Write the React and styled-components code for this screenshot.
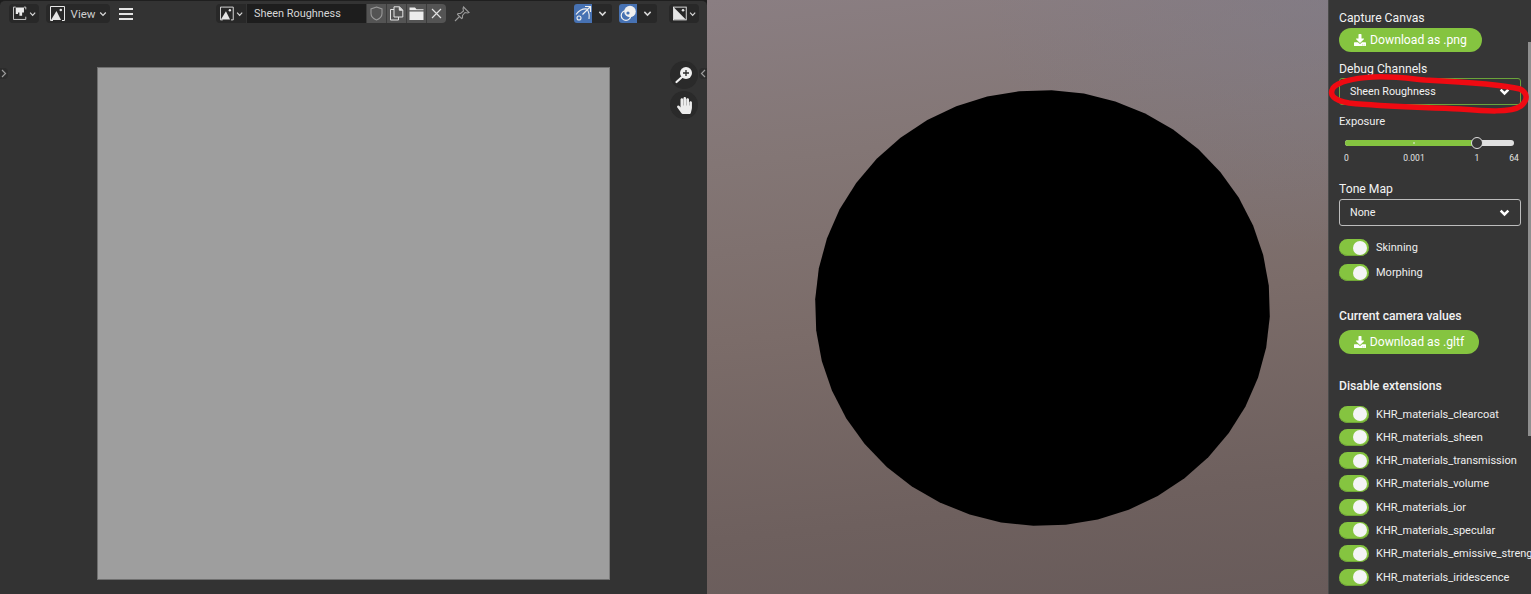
import React from 'react';
import styled, { createGlobalStyle } from 'styled-components';
import { FaDownload, FaHandPaper } from 'react-icons/fa';

const extensions = [
  'KHR_materials_clearcoat',
  'KHR_materials_sheen',
  'KHR_materials_transmission',
  'KHR_materials_volume',
  'KHR_materials_ior',
  'KHR_materials_specular',
  'KHR_materials_emissive_strength',
  'KHR_materials_iridescence',
];

// the model in the viewport is low poly, so the outline has visible facets
const spherePoints = Array.from({ length: 44 }, (_, i) => {
  const a = (i / 44) * Math.PI * 2 + 0.04;
  return `${(227.5 + 227.5 * Math.cos(a)).toFixed(1)},${(218 + 218 * Math.sin(a)).toFixed(1)}`;
}).join(' ');

const Chevron = ({ size = 8, color = '#d8d8d8', width = 1.3 }) => (
  <svg width={size} height={size} viewBox="0 0 10 10" fill="none">
    <path d="M1.5 3.2 L5 6.8 L8.5 3.2" stroke={color} strokeWidth={width * 1.25} />
  </svg>
);

const ImageIcon = () => (
  <svg width="15" height="15" viewBox="0 0 15 15" fill="none">
    <path d="M3 .5H.5v14H3M12 .5h2.500v14H12M3 .5h9" stroke="#e6e6e6" />
    <path d="M1 14 L6.500 5 L11 14Z" fill="#e6e6e6" />
    <circle cx="10.800" cy="4" r="1.300" fill="#e6e6e6" />
  </svg>
);

const EditorTypeIcon = () => (
  <svg width="15" height="15" viewBox="0 0 15 15" fill="none">
    <path d="M3 .5H.5v13.500h13.500V11M14 3V.5h-2" stroke="#d8d8d8" />
    <path d="M3 1h9v5.500h-2V10H7V6.500H5.500V8H3Z" fill="#ececec" />
  </svg>
);

const ShadingIcon = () => (
  <svg width="15" height="15" viewBox="0 0 15 15" fill="none">
    <rect x=".5" y=".5" width="14" height="14" stroke="#e6e6e6" />
    <path d="M1 1 L14 14 H1 Z" fill="#e6e6e6" />
    <circle cx="11" cy="4" r="1.400" fill="#e6e6e6" />
  </svg>
);

const GizmoIcon = () => (
  <svg width="17" height="17" viewBox="0 0 17 17" fill="none" stroke="#f0f0f0">
    <path d="M1 9.500 C4 5.500 8 3.500 12 4 C14 7 14.500 10.500 14 14" strokeWidth="1.100" />
    <path d="M10 1.500h5.500v5.500M15.500 1.500 L7.500 9.500" strokeWidth="1.200" />
    <circle cx="4" cy="13" r="2" strokeWidth="1.100" />
  </svg>
);

const OverlayIcon = () => (
  <svg width="17" height="17" viewBox="0 0 17 17" fill="none">
    <circle cx="6" cy="10.500" r="4.800" stroke="#f0f0f0" strokeWidth="1.200" />
    <circle cx="10" cy="6.500" r="5.800" fill="#f0f0f0" />
    <circle cx="8" cy="8" r="1.600" fill="#4772b3" />
  </svg>
);

const ShieldIcon = () => (
  <svg width="15" height="15" viewBox="0 0 15 15" fill="none">
    <path d="M7.500 1 L13 3 V7.500 C13 11 10 13 7.500 14 C5 13 2 11 2 7.500 V3 Z" stroke="#9a9a9a" strokeWidth="1.100" />
  </svg>
);

const CopyIcon = () => (
  <svg width="15" height="15" viewBox="0 0 15 15" fill="none" stroke="#e2e2e2">
    <path d="M5 3.500H1.500v10.500h8v-3" />
    <path d="M5 11V.8h5.500L13.800 4V11Z" />
    <path d="M10.300 1v3.200h3.500" fill="#e2e2e2" />
  </svg>
);

const FolderIcon = () => (
  <svg width="15" height="15" viewBox="0 0 15 15">
    <path d="M.5 1.500H6L7.500 3.300H14.500V4.300H.5Z" fill="#ececec" />
    <path d="M.5 5.500H14.500V14H.5Z" fill="#ececec" />
  </svg>
);

const CloseIcon = () => (
  <svg width="11" height="11" viewBox="0 0 11 11" stroke="#e0e0e0" strokeWidth="1.200">
    <path d="M1 1 L10 10 M10 1 L1 10" />
  </svg>
);

const PinIcon = () => (
  <svg width="16" height="16" viewBox="0 0 16 16" fill="none" stroke="#9a9a9a" strokeWidth="1.100">
    <path d="M9.500 1 L15 6.500 L13.500 7 L11 6.500 L8.500 9.500 L8.500 12 L7.500 12.500 L3.500 8.500 L4 7.500 L6.500 7.500 L9.500 5 L9 2.500 Z" />
    <path d="M5.500 10.500 L1 15" />
  </svg>
);

const ZoomIcon = () => (
  <svg width="20" height="20" viewBox="0 0 20 20" fill="none">
    <circle cx="12" cy="8" r="6" fill="#f0f0f0" />
    <path d="M12 5v6M9 8h6" stroke="#2b2b2b" strokeWidth="1.300" />
    <path d="M7.500 12.500 L2.500 17" stroke="#f0f0f0" strokeWidth="2.200" strokeLinecap="round" />
  </svg>
);

const TabArrow = ({ left }) => (
  <svg width="6" height="9" viewBox="0 0 6 9" fill="none">
    <path d={left ? 'M5 1 L1.500 4.500 L5 8' : 'M1 1 L4.500 4.500 L1 8'} stroke="#9c9c9c" strokeWidth="1.200" />
  </svg>
);

const App = () => {
  return (
    <>
      <GlobalStyle />
      <Page>
        <Editor>
          <Toolbar>
            <LeftGroup>
              <DarkDropdown>
                <EditorTypeIcon />
                <Chevron />
              </DarkDropdown>
              <DarkDropdown wide>
                <ImageIcon />
                <ToolbarLabel>View</ToolbarLabel>
                <Chevron />
              </DarkDropdown>
              <Hamburger>
                <span />
                <span />
                <span />
              </Hamburger>
            </LeftGroup>
            <CenterGroup>
              <Joined>
                <DarkDropdown square>
                  <ImageIcon />
                  <Chevron />
                </DarkDropdown>
                <NameField>Sheen Roughness</NameField>
                <ActionButton><ShieldIcon /></ActionButton>
                <ActionButton><CopyIcon /></ActionButton>
                <ActionButton><FolderIcon /></ActionButton>
                <ActionButton last><CloseIcon /></ActionButton>
              </Joined>
              <PinSlot><PinIcon /></PinSlot>
            </CenterGroup>
            <RightGroup>
              <Joined>
                <BlueToggle><GizmoIcon /></BlueToggle>
                <ChevronToggle><Chevron size={9} /></ChevronToggle>
              </Joined>
              <Joined>
                <BlueToggle><OverlayIcon /></BlueToggle>
                <ChevronToggle><Chevron size={9} /></ChevronToggle>
              </Joined>
              <ShadingDropdown>
                <ShadingIcon />
                <Chevron />
              </ShadingDropdown>
            </RightGroup>
          </Toolbar>
          <ImageArea>
            <ImagePreview />
          </ImageArea>
          <EdgeTab side="left"><TabArrow /></EdgeTab>
          <EdgeTab side="right"><TabArrow left /></EdgeTab>
          <GizmoStack>
            <GizmoButton><ZoomIcon /></GizmoButton>
            <GizmoButton><FaHandPaper size={17} color="#ececec" /></GizmoButton>
          </GizmoStack>
        </Editor>

        <Viewport>
          <Sphere viewBox="0 0 455 436">
            <polygon points={spherePoints} fill="#000" />
          </Sphere>
        </Viewport>

        <Panel>
          <Scrollbar />
          <SectionLabel>Capture Canvas</SectionLabel>
          <PillButton width={143}>
            <FaDownload size={12} />
            Download as .png
          </PillButton>
          <SectionLabel top={9}>Debug Channels</SectionLabel>
          <SelectBox accent top={1}>
            Sheen Roughness
            <Chevron size={11} color="#fff" width={1.800} />
          </SelectBox>
          <SmallLabel>Exposure</SmallLabel>
          <SliderTrack>
            <SliderFill />
            <SliderDot />
            <SliderThumb />
          </SliderTrack>
          <TickRow>
            <Tick at={0}>0</Tick>
            <Tick at={69}>0.001</Tick>
            <Tick at={132}>1</Tick>
            <Tick at={169}>64</Tick>
          </TickRow>
          <SectionLabel top={17}>Tone Map</SectionLabel>
          <SelectBox top={2}>
            None
            <Chevron size={11} color="#fff" width={1.800} />
          </SelectBox>
          <ToggleList top={13} step={8}>
            <ToggleRow><Switch /><ToggleText>Skinning</ToggleText></ToggleRow>
            <ToggleRow><Switch /><ToggleText>Morphing</ToggleText></ToggleRow>
          </ToggleList>
          <HeavyLabel top={27}>Current camera values</HeavyLabel>
          <PillButton width={140} top={6}>
            <FaDownload size={12} />
            Download as .gltf
          </PillButton>
          <HeavyLabel top={24}>Disable extensions</HeavyLabel>
          <ToggleList top={11.500} step={6.300}>
            {extensions.map((name) => (
              <ToggleRow key={name}>
                <Switch />
                <ToggleText>{name}</ToggleText>
              </ToggleRow>
            ))}
          </ToggleList>
        </Panel>
        <Scribble viewBox="0 0 210 125" fill="none">
          <path
            d="M52 77 C36 78 18 81 12 88 C8 95 12 100 28 103 C66 107 104 107 139 109 C164 111 190 113 200 106 C207 100 207 93 199 89 C179 84 144 82 104 80 C84 78 69 76 52 77"
            stroke="#ef0a12"
            strokeWidth="5.500"
            strokeLinecap="round"
          />
        </Scribble>
      </Page>
    </>
  );
};

export default App;

const GlobalStyle = createGlobalStyle`
  html, body {
    margin: 0;
    padding: 0;
    height: 100%;
    overflow: hidden;
    background: #1d1d1d;
    font-family: Roboto, "Liberation Sans", sans-serif;
  }
  * {
    box-sizing: border-box;
  }
`;

const Page = styled.div`
  position: relative;
  display: flex;
  width: 1531px;
  height: 594px;
  overflow: hidden;
`;

const Editor = styled.div`
  position: relative;
  width: 707px;
  flex-shrink: 0;
  background-color: #333333;
  border-top: 1px solid #1f1f1f;
  border-radius: 5px 5px 0 0;
`;

const Toolbar = styled.div`
  display: flex;
  align-items: center;
  height: 26px;
  padding: 3px 0 4px 9px;
`;

const LeftGroup = styled.div`
  display: flex;
  align-items: center;
  gap: 7px;
  width: 207px;
`;

const CenterGroup = styled.div`
  display: flex;
  align-items: center;
  width: 358px;
`;

const RightGroup = styled.div`
  display: flex;
  align-items: center;
  gap: 7px;
`;

const Joined = styled.div`
  display: flex;
  align-items: center;
  height: 19px;
`;

const DarkDropdown = styled.div`
  display: flex;
  align-items: center;
  justify-content: space-between;
  gap: 2px;
  width: ${(p) => (p.wide ? '64px' : '30px')};
  height: 19px;
  padding: 0 3px 0 4px;
  background-color: #282828;
  border-radius: ${(p) => (p.square ? '4px 0 0 4px' : '4px')};
`;

const ShadingDropdown = styled(DarkDropdown)`
  margin-left: 5px;
`;

const ToolbarLabel = styled.span`
  font-size: 11.500px;
  margin-left: 2px;
  color: #cfcfcf;
`;

const Hamburger = styled.div`
  display: flex;
  flex-direction: column;
  gap: 3px;
  margin-left: 2px;

  span {
    display: block;
    width: 14px;
    height: 2px;
    background-color: #e4e4e4;
  }
`;

const NameField = styled.div`
  display: flex;
  align-items: center;
  width: 120px;
  height: 19px;
  padding-left: 7px;
  font-size: 10.900px;
  color: #d6d6d6;
  background-color: #1d1d1d;
  border-left: 1px solid #333;
`;

const ActionButton = styled.div`
  display: flex;
  align-items: center;
  justify-content: center;
  width: 20px;
  height: 19px;
  background-color: #545454;
  border-left: 1px solid #3c3c3c;
  border-radius: ${(p) => (p.last ? '0 4px 4px 0' : '0')};
`;

const PinSlot = styled.div`
  display: flex;
  margin-left: 8px;
`;

const BlueToggle = styled.div`
  display: flex;
  align-items: center;
  justify-content: center;
  width: 18px;
  height: 19px;
  background-color: #4772b3;
  border-radius: 3px 0 0 3px;
`;

const ChevronToggle = styled.div`
  display: flex;
  align-items: center;
  justify-content: center;
  width: 20px;
  height: 19px;
  background-color: #282828;
  border-radius: 0 3px 3px 0;
`;

const ImageArea = styled.div`
  padding: 40px 0 0 97px;
`;

const ImagePreview = styled.div`
  width: 513px;
  height: 513px;
  background-color: #9e9e9e;
  border: 1px solid #6f6f6f;
  border-right-color: #7c7c7c;
`;

const EdgeTab = styled.div`
  position: absolute;
  top: 67px;
  ${(p) => (p.side === 'left' ? 'left: 0;' : 'right: 0;')}
  display: flex;
  align-items: center;
  justify-content: center;
  width: 8px;
  height: 11px;
  background-color: #2c2c2c;
  border-radius: ${(p) => (p.side === 'left' ? '0 4px 4px 0' : '4px 0 0 4px')};
`;

const GizmoStack = styled.div`
  position: absolute;
  top: 60px;
  left: 670px;
  display: flex;
  flex-direction: column;
  gap: 2px;
`;

const GizmoButton = styled.div`
  display: flex;
  align-items: center;
  justify-content: center;
  width: 28px;
  height: 28px;
  background-color: #2a2a2a;
  border-radius: 50%;
`;

const Viewport = styled.div`
  flex: 1;
  display: flex;
  justify-content: center;
  align-items: center;
  padding: 21px 0 0 50px;
  background:
    radial-gradient(ellipse 55% 42% at 100% 0%, rgba(126, 124, 140, 0.5), rgba(126, 124, 140, 0)),
    linear-gradient(174deg, #8a7e82 0%, #837675 25%, #7b6c69 52%, #6e605e 82%, #685b5a 100%);
`;

const Sphere = styled.svg`
  width: 455px;
  height: 436px;
  flex-shrink: 0;
`;

const Panel = styled.div`
  position: relative;
  width: 203px;
  flex-shrink: 0;
  height: 594px;
  padding: 10px 0 0 10px;
  overflow: hidden;
  background-color: #363636;
  border-left: 1px solid #4a4a4a;
  color: #ffffff;
`;

const Scrollbar = styled.div`
  position: absolute;
  top: 42px;
  right: 0;
  width: 3px;
  height: 394px;
  background-color: #8f8f8f;
`;

const SectionLabel = styled.div`
  margin-top: ${(p) => p.top || 0}px;
  font-size: 12.200px;
  line-height: 16px;
  color: #f2f2f2;
`;

const HeavyLabel = styled(SectionLabel)`
  font-weight: 500;
`;

const SmallLabel = styled.div`
  margin-top: 10px;
  font-size: 11.200px;
  line-height: 14px;
  color: #eeeeee;
`;

const PillButton = styled.div`
  display: flex;
  align-items: center;
  justify-content: center;
  gap: 4px;
  width: ${(p) => p.width}px;
  height: 24px;
  margin-top: ${(p) => p.top || 2}px;
  font-size: 12.200px;
  color: #ffffff;
  background-color: #85c440;
  border-radius: 12px;
`;

const SelectBox = styled.div`
  display: flex;
  align-items: center;
  justify-content: space-between;
  width: 182px;
  height: 27px;
  margin-top: ${(p) => p.top}px;
  padding: 0 10px 0 10px;
  font-size: 10.750px;
  color: #f2f2f2;
  border: 1px solid ${(p) => (p.accent ? '#6aa33a' : '#bdbdbd')};
  border-radius: 3px;
`;

const SliderTrack = styled.div`
  position: relative;
  width: 169px;
  height: 6px;
  margin: 11px 0 0 6px;
  background-color: #e0e0e0;
  border-radius: 3px;
`;

const SliderFill = styled.div`
  width: 132px;
  height: 6px;
  background-color: #85c440;
  border-radius: 3px 0 0 3px;
`;

const SliderDot = styled.div`
  position: absolute;
  top: 2px;
  left: 68px;
  width: 2px;
  height: 2px;
  background-color: #b5d98f;
`;

const SliderThumb = styled.div`
  position: absolute;
  top: -3px;
  left: 126px;
  width: 12px;
  height: 12px;
  background-color: #363636;
  border: 1px solid #e0e0e0;
  border-radius: 50%;
`;

const TickRow = styled.div`
  position: relative;
  height: 12px;
  margin: 6px 0 0 6px;
`;

const Tick = styled.span`
  position: absolute;
  top: 0;
  left: ${(p) => p.at}px;
  font-size: 8.500px;
  line-height: 12px;
  color: #e4e4e4;
  transform: translateX(-50%);

  &:first-child {
    transform: none;
    margin-left: -1px;
  }
`;

const ToggleList = styled.div`
  display: flex;
  flex-direction: column;
  gap: ${(p) => p.step}px;
  margin-top: ${(p) => p.top}px;
`;

const ToggleRow = styled.div`
  display: flex;
  align-items: center;
  gap: 7px;
  height: 17px;
`;

const Switch = styled.div`
  position: relative;
  width: 30px;
  height: 17px;
  flex-shrink: 0;
  background-color: #85c440;
  box-shadow: inset 0 -1px 0 #6fa536;
  border-radius: 9px;

  &::after {
    content: '';
    position: absolute;
    top: 1.500px;
    right: 2px;
    width: 14px;
    height: 14px;
    background-color: #f4f4f6;
    border-radius: 50%;
  }
`;

const ToggleText = styled.span`
  font-size: 11px;
  white-space: nowrap;
  color: #eeeeee;
`;

// hand drawn marker around the select, sits over the panel edge
const Scribble = styled.svg`
  position: absolute;
  top: 0;
  right: 0;
  width: 210px;
  height: 125px;
  pointer-events: none;
`;
